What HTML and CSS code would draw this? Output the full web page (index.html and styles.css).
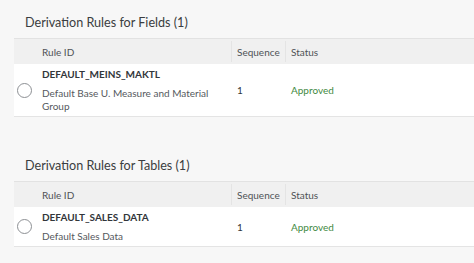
FILE: index.html
```html
<!DOCTYPE html>
<html>
<head>
<meta charset="utf-8">
<link rel="stylesheet" href="styles.css">
</head>
<body>
<div class="page">
  <section class="block first">
    <h2 class="title">Derivation Rules for Fields (1)</h2>
    <div class="table">
      <div class="row head">
        <div class="cell sel"></div>
        <div class="cell rule">Rule ID</div>
        <div class="cell seq">Sequence</div>
        <div class="cell status">Status</div>
      </div>
      <div class="row data tall">
        <div class="cell sel"><span class="radio"></span></div>
        <div class="cell rule">
          <div class="id">DEFAULT_MEINS_MAKTL</div>
          <div class="desc">Default Base U. Measure and Material Group</div>
        </div>
        <div class="cell seq">1</div>
        <div class="cell status ok">Approved</div>
      </div>
    </div>
  </section>
  <section class="block second">
    <h2 class="title">Derivation Rules for Tables (1)</h2>
    <div class="table">
      <div class="row head">
        <div class="cell sel"></div>
        <div class="cell rule">Rule ID</div>
        <div class="cell seq">Sequence</div>
        <div class="cell status">Status</div>
      </div>
      <div class="row data">
        <div class="cell sel"><span class="radio"></span></div>
        <div class="cell rule">
          <div class="id">DEFAULT_SALES_DATA</div>
          <div class="desc">Default Sales Data</div>
        </div>
        <div class="cell seq">1</div>
        <div class="cell status ok">Approved</div>
      </div>
    </div>
  </section>
</div>
</body>
</html>
```
FILE: styles.css
```css
html, body {
  margin: 0;
  padding: 0;
  background: #f7f7f7;
}
body {
  font-family: Lato, "Open Sans", sans-serif;
  color: #32363a;
  width: 474px;
  height: 263px;
  overflow: hidden;
}
.page {
  padding-left: 14px;
}
.block.first {
  padding-top: 13px;
}
.block.second {
  padding-top: 39px;
}
.title {
  margin: 0 0 5px 11px;
  font-weight: 400;
  font-size: 12.6px;
  line-height: 20px;
  color: #3a3d40;
}
.table {
  display: flex;
  flex-direction: column;
}
.row {
  display: grid;
  grid-template-columns: 28px 189px 54px 1fr;
  box-sizing: border-box;
}
.head {
  background: #f0f0f0;
  border-top: 1px solid #e2e2e2;
  height: 26px;
  font-size: 10px;
  color: #4f5256;
}
.head .cell {
  display: flex;
  align-items: center;
  padding-left: 5px;
}
.head .cell.sel,
.head .cell.rule { padding-left: 0; }
.head .cell.seq, .head .cell.status {
  border-left: 1px solid #e4e4e4;
  margin: 2px 0;
}
.data {
  background: #fff;
  border-bottom: 1px solid #e4e4e4;
  font-size: 10px;
  height: 40px;
}
.data.tall {
  height: 53px;
}
.data .cell {
  display: flex;
  align-items: center;
  padding-left: 5px;
}
.data .cell.sel {
  padding-left: 3px;
}
.data .cell.rule {
  padding-left: 0;
  padding-right: 4px;
  flex-direction: column;
  align-items: flex-start;
  justify-content: center;
}
.data .cell.seq { padding-left: 6px; }
.data .cell.status { padding-left: 6px; }
.radio {
  width: 15px;
  height: 15px;
  border: 1px solid #8d9094;
  border-radius: 50%;
  background: #fff;
  box-sizing: border-box;
}
.id {
  font-weight: 700;
  font-size: 10px;
  color: #32363a;
  line-height: 13px;
  margin-bottom: 6px;
}
.desc {
  font-size: 10px;
  line-height: 13px;
  color: #55595d;
}
.ok {
  color: #3f8a3f;
}
```
